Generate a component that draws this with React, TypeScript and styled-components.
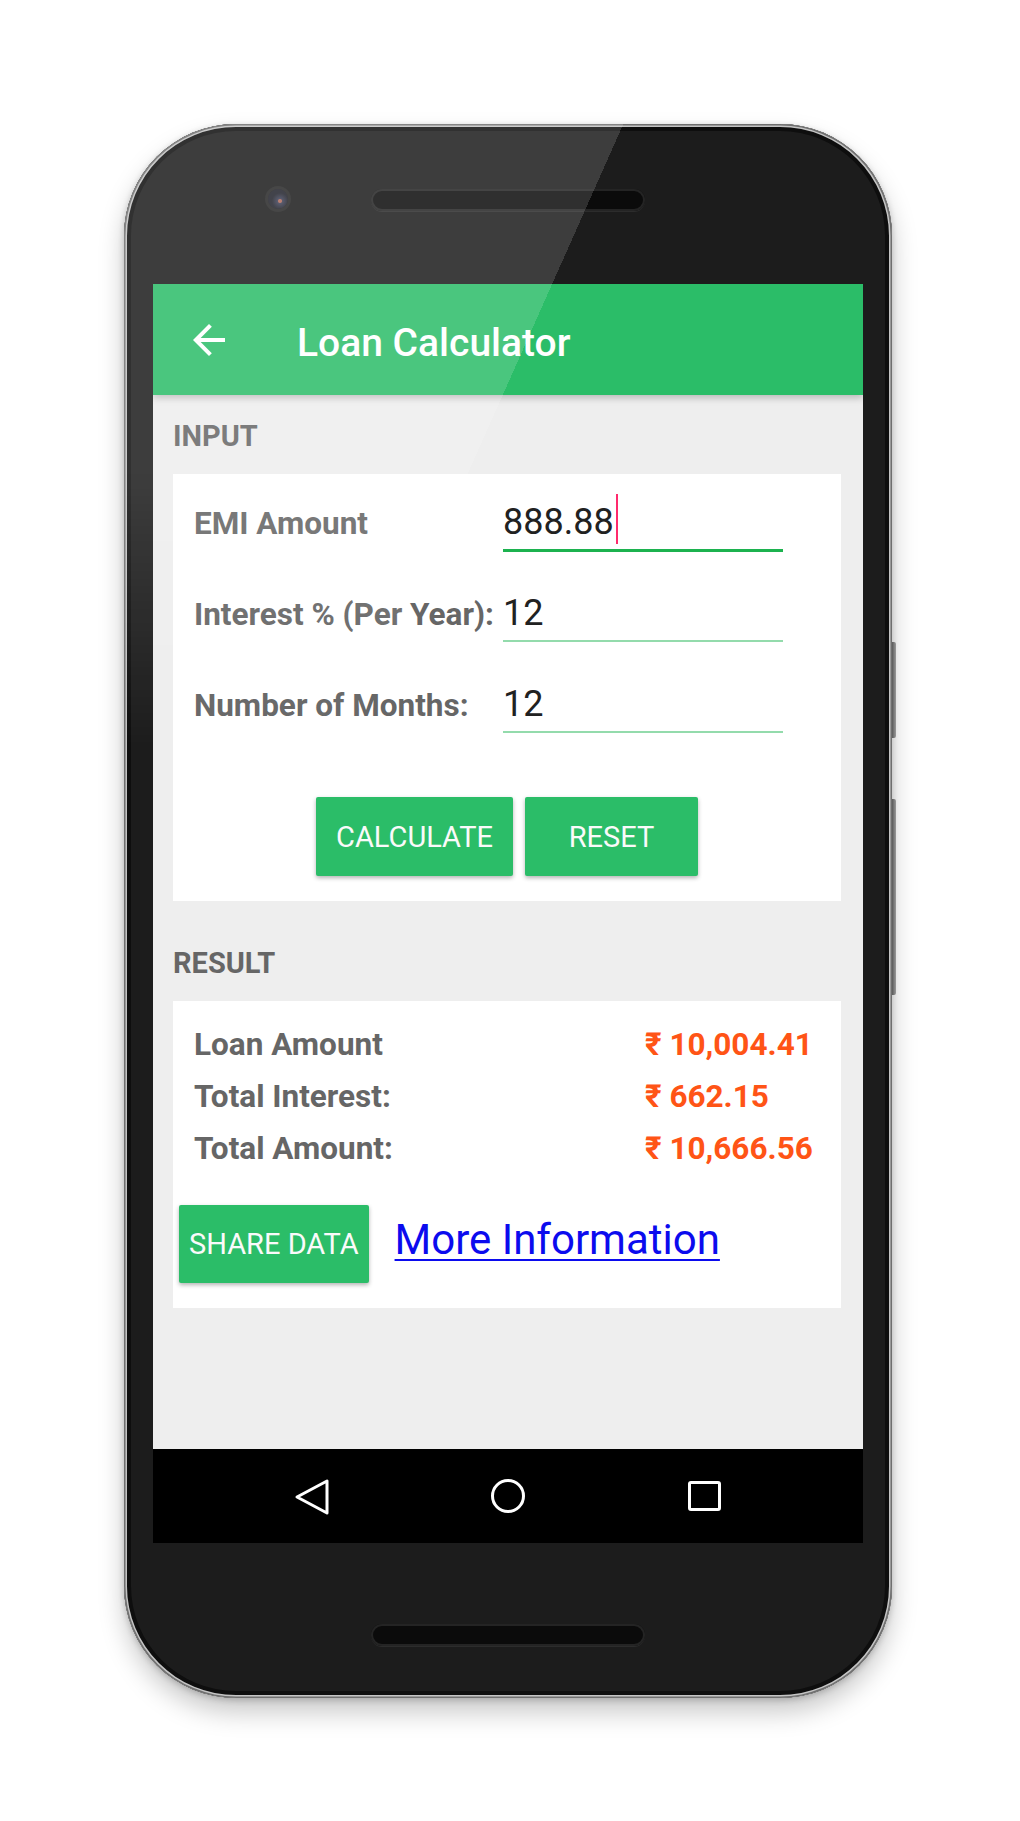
import React from 'react';
import styled, { createGlobalStyle } from 'styled-components';

const GlobalStyle = createGlobalStyle`
  html, body {
    margin: 0;
    padding: 0;
    background: #fff;
    font-family: Roboto, "Noto Sans", Arial, sans-serif;
  }
`;

const Page = styled.div`
  width: 1020px;
  height: 1821px;
  box-sizing: border-box;
  padding: 124px 0 0 124px;
  background: #fff;
`;

const Phone = styled.div`
  position: relative;
  width: 768px;
  height: 1574px;
  border-radius: 112px;
  background: #1c1c1c;
  display: flex;
  flex-direction: column;
  box-shadow:
    inset 0 0 0 1.5px #6f6f6f,
    inset 0 0 0 3px #c4c4c4,
    inset 0 0 0 7px #0e0e0e,
    0 14px 26px rgba(0, 0, 0, 0.22),
    0 2px 6px rgba(0, 0, 0, 0.2);
`;

const Glare = styled.div`
  position: absolute;
  inset: 0;
  border-radius: inherit;
  pointer-events: none;
  z-index: 3;
  background: linear-gradient(114deg, rgba(255, 255, 255, 0.15) 34%, rgba(255, 255, 255, 0) 34%);
  -webkit-mask-image: linear-gradient(to bottom, #000 22%, transparent 40%);
  mask-image: linear-gradient(to bottom, #000 22%, transparent 40%);
`;

const SideKey = styled.div<{ $top: number; $height: number }>`
  position: absolute;
  right: -4px;
  top: ${(p) => p.$top}px;
  height: ${(p) => p.$height}px;
  width: 4px;
  border-radius: 0 2px 2px 0;
  background: linear-gradient(to right, #5a5a5a, #9a9a9a);
`;

const TopBezel = styled.div`
  height: 160px;
  box-sizing: border-box;
  padding: 65px 0 0 144px;
  display: flex;
  align-items: center;
  align-self: stretch;
`;

const Camera = styled.div`
  width: 20px;
  height: 20px;
  border-radius: 50%;
  margin-right: 83px;
  background: radial-gradient(circle at 60% 60%, #b06a5a 0 1.5px, #3c3f55 2.5px, #22232c 8px);
  box-shadow: 0 0 0 3px rgba(255, 255, 255, 0.05);
  align-self: flex-start;
`;

const Speaker = styled.div`
  width: 274px;
  height: 22px;
  border-radius: 11px;
  background: #0b0b0b;
  box-shadow: inset 0 0 0 2px #242424, 0 1px 0 rgba(255, 255, 255, 0.07);
  align-self: flex-start;
`;

const Screen = styled.div`
  margin: 0 29px;
  height: 1259px;
  display: flex;
  flex-direction: column;
  background: #eeeeee;
  overflow: hidden;
`;

const Toolbar = styled.header`
  position: relative;
  z-index: 1;
  height: 111px;
  flex-shrink: 0;
  display: flex;
  align-items: center;
  padding-left: 32px;
  background: #2bbd68;
  box-shadow: 0 3px 7px rgba(0, 0, 0, 0.22);
`;

const Title = styled.h1`
  margin: 7px 0 0 64px;
  font-size: 39px;
  line-height: 44px;
  font-weight: 500;
  color: #fff;
`;

const Content = styled.main`
  flex: 1;
  padding: 24px 22px 0 20px;
`;

const SectionLabel = styled.h2<{ $gap?: number }>`
  margin: ${(p) => p.$gap ?? 0}px 0 21px;
  font-size: 29px;
  line-height: 34px;
  font-weight: 700;
  color: #666;
`;

const Card = styled.section<{ $pad: string }>`
  background: #fff;
  padding: ${(p) => p.$pad};
`;

const FieldRow = styled.div`
  display: flex;
  align-items: baseline;

  & + & {
    margin-top: 40px;
  }
`;

const FieldLabel = styled.label`
  width: 309px;
  flex-shrink: 0;
  white-space: nowrap;
  font-size: 31.5px;
  line-height: 36px;
  font-weight: 700;
  color: #666;
`;

const FieldValue = styled.div<{ $focused?: boolean }>`
  width: 280px;
  height: 44px;
  padding-bottom: 5px;
  font-size: 36px;
  line-height: 44px;
  color: #212121;
  border-bottom: 2px solid ${(p) => (p.$focused ? '#1cb24f' : '#93dbac')};
  box-shadow: ${(p) => (p.$focused ? '0 1px 0 #1cb24f' : 'none')};
`;

const Caret = styled.span`
  display: inline-block;
  width: 2px;
  height: 50px;
  margin: -8px 0 0 2px;
  vertical-align: -10px;
  background: #ff2a6d;
`;

const ButtonRow = styled.div`
  display: flex;
  justify-content: center;
  gap: 12px;
  margin-top: 64px;
`;

const Button = styled.button<{ $compact?: boolean }>`
  height: ${(p) => (p.$compact ? 78 : 79)}px;
  min-width: ${(p) => (p.$compact ? 0 : 173)}px;
  padding: 0 ${(p) => (p.$compact ? 10 : 20)}px;
  border: none;
  border-radius: 2px;
  background: #2bbd68;
  color: #fafafa;
  font-family: Roboto, sans-serif;
  font-size: 29px;
  font-weight: 400;
  text-transform: uppercase;
  box-shadow: 0 2px 4px rgba(0, 0, 0, 0.3);
  cursor: pointer;
`;

const ResultRow = styled.div`
  display: flex;
  font-size: 31.5px;
  line-height: 52px;
  font-weight: 700;
`;

const ResultLabel = styled.span`
  width: 451px;
  flex-shrink: 0;
  color: #666;
`;

const ResultValue = styled.span`
  color: #ff5416;
  white-space: nowrap;
`;

const ActionRow = styled.div`
  display: flex;
  align-items: baseline;
  margin: 30px 0 0 -15px;
`;

const MoreLink = styled.a`
  margin-left: 26px;
  font-size: 42px;
  line-height: 48px;
  color: #0b0bee;
  text-decoration: underline;
  text-decoration-thickness: 2px;
  text-underline-offset: 5px;
  white-space: nowrap;
`;

const NavBar = styled.nav`
  height: 94px;
  flex-shrink: 0;
  display: flex;
  align-items: center;
  justify-content: center;
  gap: 156px;
  background: #000;
`;

const NavIcon = styled.svg`
  width: 40px;
  height: 40px;
  fill: none;
  stroke: #fff;
  stroke-width: 3;
  stroke-linejoin: round;
`;

const Chin = styled.div`
  flex: 1;
  display: flex;
  justify-content: center;
  padding-top: 81px;
`;

const BackArrow = () => (
  <svg width="48" height="48" viewBox="0 0 24 24" fill="#fff">
    <path d="M20 11H7.83l5.59-5.59L12 4l-8 8 8 8 1.41-1.41L7.83 13H20v-2z" />
  </svg>
);

const results = [
  { label: 'Loan Amount', value: '₹ 10,004.41' },
  { label: 'Total Interest:', value: '₹ 662.15' },
  { label: 'Total Amount:', value: '₹ 10,666.56' },
];

export default function App() {
  return (
    <Page>
      <GlobalStyle />
      <Phone>
        <SideKey $top={518} $height={96} />
        <SideKey $top={675} $height={196} />

        <TopBezel>
          <Camera />
          <Speaker />
        </TopBezel>

        <Screen>
          <Toolbar>
            <BackArrow />
            <Title>Loan Calculator</Title>
          </Toolbar>

          <Content>
            <SectionLabel>INPUT</SectionLabel>
            <Card $pad="26px 21px 25px">
              <FieldRow>
                <FieldLabel>EMI Amount</FieldLabel>
                <FieldValue $focused>
                  888.88
                  <Caret />
                </FieldValue>
              </FieldRow>
              <FieldRow>
                <FieldLabel>Interest % (Per Year):</FieldLabel>
                <FieldValue>12</FieldValue>
              </FieldRow>
              <FieldRow>
                <FieldLabel>Number of Months:</FieldLabel>
                <FieldValue>12</FieldValue>
              </FieldRow>
              <ButtonRow>
                <Button>Calculate</Button>
                <Button>Reset</Button>
              </ButtonRow>
            </Card>

            <SectionLabel $gap={45}>RESULT</SectionLabel>
            <Card $pad="18px 21px 25px">
              {results.map((r) => (
                <ResultRow key={r.label}>
                  <ResultLabel>{r.label}</ResultLabel>
                  <ResultValue>{r.value}</ResultValue>
                </ResultRow>
              ))}
              <ActionRow>
                <Button $compact>Share Data</Button>
                <MoreLink href="#">More Information</MoreLink>
              </ActionRow>
            </Card>
          </Content>

          <NavBar>
            <NavIcon viewBox="0 0 40 40">
              <path d="M5 21 L35 5 L35 37 Z" />
            </NavIcon>
            <NavIcon viewBox="0 0 40 40">
              <circle cx="20" cy="20" r="15.5" />
            </NavIcon>
            <NavIcon viewBox="0 0 40 40">
              <rect x="5.5" y="6.5" width="30" height="27" rx="1.5" />
            </NavIcon>
          </NavBar>
        </Screen>

        <Chin>
          <Speaker />
        </Chin>

        <Glare />
      </Phone>
    </Page>
  );
}
